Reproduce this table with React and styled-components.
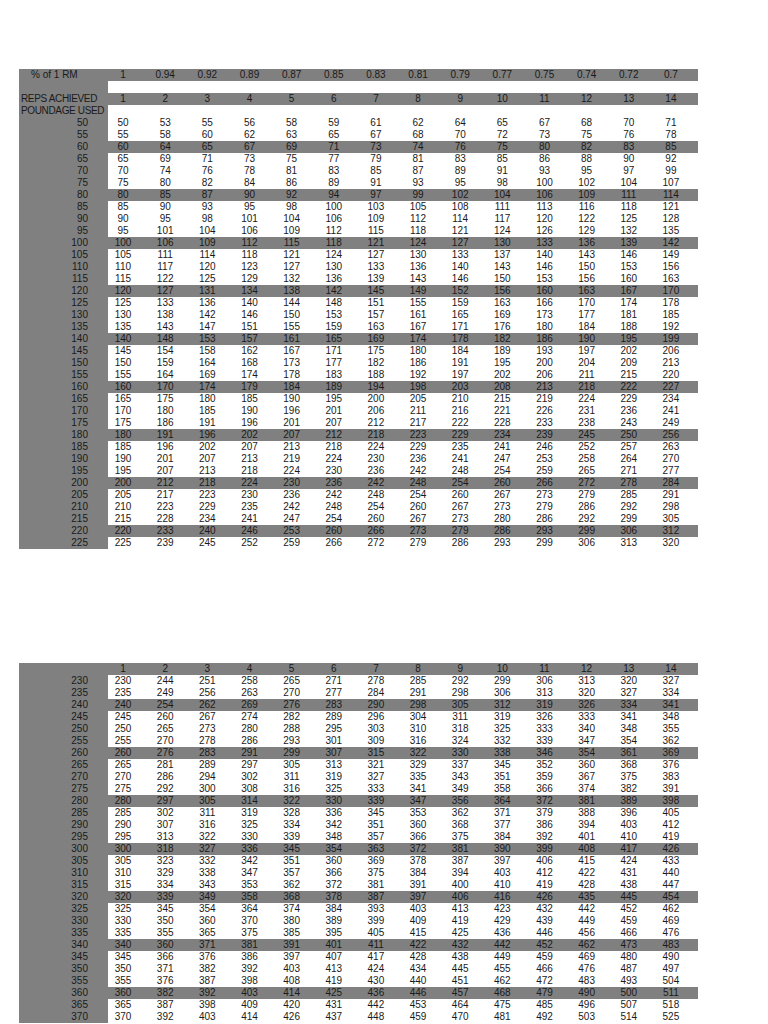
import styled, { createGlobalStyle } from "styled-components";

const GRAY = "#808080";

const GlobalStyle = createGlobalStyle`
  html, body {
    margin: 0;
    padding: 0;
    background: #fff;
  }
  body {
    font-family: "Liberation Sans", Arial, sans-serif;
    font-size: 10px;
    color: #1a1a1a;
  }
`;

const Page = styled.div`
  padding: 69px 0 0 19px;
  width: 749px;
  height: 955px;
  overflow: hidden;
`;

const Sheet = styled.div`
  width: 679px;
  margin-bottom: ${(p) => p.$gap || 0}px;
`;

const Row = styled.div`
  display: grid;
  grid-template-columns: 89px repeat(14, 1fr);
  height: 12px;
  line-height: 12px;
  background: ${(p) => (p.$band ? GRAY : "#fff")};
`;

const Label = styled.div`
  background: ${GRAY};
  white-space: nowrap;
  text-align: ${(p) => p.$align || "right"};
  padding: ${(p) =>
    p.$align === "left" ? `0 0 0 ${p.$indent || 2}px` : "0 20px 0 0"};
  letter-spacing: ${(p) => (p.$caps ? "-0.35px" : "0")};
`;

const Cell = styled.div`
  text-align: center;
  padding-right: 12px;
`;

const PCTS = ["1", "0.94", "0.92", "0.89", "0.87", "0.85", "0.83", "0.81", "0.79", "0.77", "0.75", "0.74", "0.72", "0.7"];
const FACTORS = [100, 106, 109, 112, 115, 118, 121, 124, 127, 130, 133, 136, 139, 142];
const REPS = FACTORS.map((_, i) => i + 1);

const OVERRIDES = { "60-9": 75 };

const calc = (w, i) => OVERRIDES[`${w}-${i}`] ?? Math.floor((w * FACTORS[i] + 50) / 100);

const range = (from, to) => {
  const out = [];
  for (let w = from; w <= to; w += 5) out.push(w);
  return out;
};

function DataRow({ weight }) {
  return (
    <Row $band={weight % 20 === 0}>
      <Label>{weight}</Label>
      {FACTORS.map((_, i) => (
        <Cell key={i}>{calc(weight, i)}</Cell>
      ))}
    </Row>
  );
}

export default function App() {
  return (
    <>
      <GlobalStyle />
      <Page>
        <Sheet $gap={114}>
          <Row $band>
            <Label $align="left" $indent={12}>% of 1 RM</Label>
            {PCTS.map((p) => (
              <Cell key={p}>{p}</Cell>
            ))}
          </Row>
          <Row>
            <Label />
          </Row>
          <Row $band>
            <Label $align="left" $caps>REPS ACHIEVED</Label>
            {REPS.map((r) => (
              <Cell key={r}>{r}</Cell>
            ))}
          </Row>
          <Row>
            <Label $align="left" $caps>POUNDAGE USED</Label>
          </Row>
          {range(50, 225).map((w) => (
            <DataRow key={w} weight={w} />
          ))}
        </Sheet>

        <Sheet>
          <Row $band>
            <Label />
            {REPS.map((r) => (
              <Cell key={r}>{r}</Cell>
            ))}
          </Row>
          {range(230, 370).map((w) => (
            <DataRow key={w} weight={w} />
          ))}
        </Sheet>
      </Page>
    </>
  );
}
